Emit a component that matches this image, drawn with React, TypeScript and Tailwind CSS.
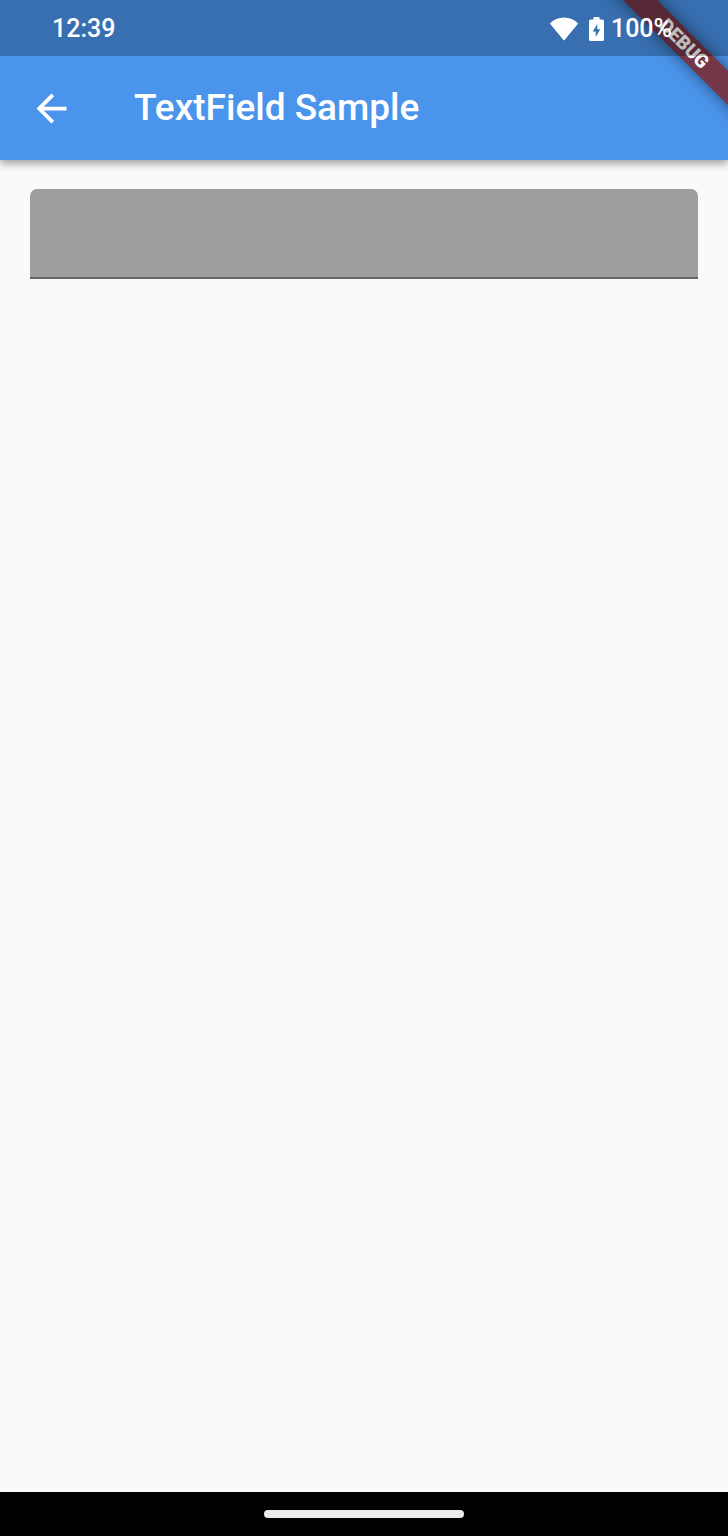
import { MdArrowBack } from 'react-icons/md';

function WifiIcon() {
  return (
    <svg viewBox="0 0 28 24" className="h-6 w-7" fill="currentColor" aria-hidden="true">
      <path d="M14 .6C8.600.6 3.700 2.700.300 6.100Q0 6.500.300 7L13.400 23Q14 23.600 14.600 23L27.700 7Q28 6.500 27.700 6.100C24.300 2.700 19.400.6 14 .6Z" />
    </svg>
  );
}

function BatteryIcon() {
  return (
    <svg viewBox="0 0 15 24" className="h-6 w-[15px]" fill="currentColor" aria-hidden="true">
      <path
        fillRule="evenodd"
        d="M5.300 0H9.700Q10.500 0 10.500.8V2.400H13.400Q15 2.400 15 4V22.400Q15 24 13.400 24H1.600Q0 24 0 22.400V4Q0 2.400 1.600 2.400H4.500V.8Q4.500 0 5.300 0ZM8.300 7L3.700 14.400H6.700V20L11.200 12.300H8.300Z"
      />
    </svg>
  );
}

function DebugBanner() {
  return (
    <div className="pointer-events-none absolute top-0 right-0 h-40 w-40 overflow-hidden">
      <div className="absolute top-8 -right-[56px] h-6 w-50 rotate-45">
        <div className="absolute inset-0 bg-black/50 blur-[8px]" />
        <div className="relative flex h-6 items-center justify-center bg-[#753748] text-[19px] leading-6 font-black text-white">
          DEBUG
        </div>
      </div>
    </div>
  );
}

function StatusBar() {
  return (
    <div className="relative z-10 flex h-14 items-center justify-between bg-black/25 pt-[2px] pr-14 pl-[52px] text-[25px] leading-8 font-medium">
      <time>12:39</time>
      <div className="flex items-center">
        <WifiIcon />
        <span className="ml-[11px] flex">
          <BatteryIcon />
        </span>
        <span className="ml-[7px]">100%</span>
      </div>
    </div>
  );
}

function AppBar() {
  return (
    <div className="flex h-26 items-center pl-[29px]">
      <button type="button" aria-label="Back" className="flex">
        <MdArrowBack className="size-[45px]" />
      </button>
      <h1 className="ml-15 text-[37px] leading-12 font-medium">TextField Sample</h1>
    </div>
  );
}

export default function App() {
  return (
    <div className="flex min-h-screen flex-col bg-[#fafafa] font-['Roboto',sans-serif]">
      <header className="relative bg-[#4a94ec] text-white shadow-[0_4px_8px_rgba(0,0,0,0.35)]">
        <DebugBanner />
        <StatusBar />
        <AppBar />
      </header>

      <main className="flex-1 px-[30px] pt-[29px]">
        <input
          type="text"
          aria-label="Text"
          className="block h-[90px] w-full rounded-t-[7px] border-b-2 border-[#666666] bg-[#9e9e9e] px-5 text-[30px] text-black/85 outline-none"
        />
      </main>

      {/* gesture navigation */}
      <footer className="flex h-11 items-center justify-center bg-black">
        <div className="h-2 w-50 rounded-full bg-[#ebebeb]" />
      </footer>
    </div>
  );
}
